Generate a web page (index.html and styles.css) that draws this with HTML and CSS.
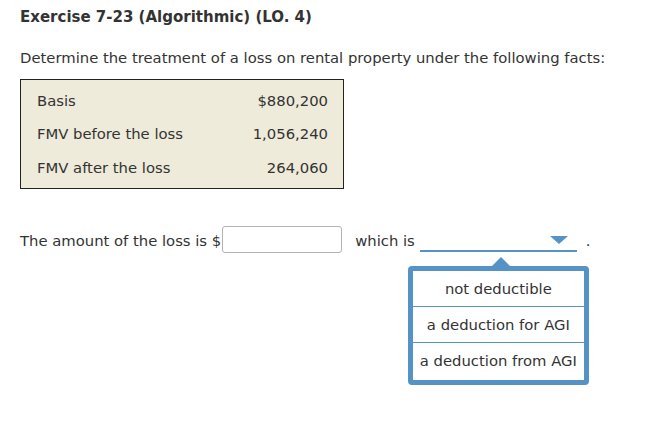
FILE: index.html
```html
<!DOCTYPE html>
<html>
<head>
<meta charset="utf-8">
<link rel="stylesheet" href="styles.css">
</head>
<body>
<div class="page">
  <h1 class="title">Exercise 7-23 (Algorithmic) (LO. 4)</h1>
  <p class="intro">Determine the treatment of a loss on rental property under the following facts:</p>
  <div class="facts">
    <div class="row"><span>Basis</span><span>$880,200</span></div>
    <div class="row"><span>FMV before the loss</span><span>1,056,240</span></div>
    <div class="row"><span>FMV after the loss</span><span>264,060</span></div>
  </div>
  <div class="answer">
    <span class="lbl">The amount of the loss is $</span><span class="inp"></span>
    <span class="lbl which">which is</span>
    <span class="dd">
      <span class="ddline"></span>
      <span class="tri"></span>
      <div class="menu">
        <span class="arrow"></span>
        <div class="opt">not deductible</div>
        <div class="opt">a deduction for AGI</div>
        <div class="opt">a deduction from AGI</div>
      </div>
    </span>
    <span class="lbl dot">.</span>
  </div>
</div>
</body>
</html>
```
FILE: styles.css
```css
html, body { margin: 0; padding: 0; background: #fff; }
body { font-family: "DejaVu Sans", Verdana, sans-serif; color: #333; font-size: 14.8px; }
.page { padding: 8px 20px 0 20px; }
.title { font-size: 15px; font-weight: bold; margin: 0; line-height: 18px; color: #333; }
.intro { margin: 23px 0 0 0; line-height: 18px; }
.facts {
  margin-top: 12px; width: 324px; height: 110px; box-sizing: border-box;
  border: 1px solid #222; background: #eeebda;
  padding: 12px 15px 0 16px;
  display: flex; flex-direction: column; gap: 15px;
}
.facts .row:last-child { margin-top: 1px; }
.row { display: flex; justify-content: space-between; line-height: 18px; }
.answer { margin-top: 37px; display: flex; align-items: flex-start; height: 200px; }
.lbl { line-height: 18px; margin-top: 6px; }
.inp {
  width: 118px; height: 25px; border: 1px solid #b3b3b3; border-radius: 3px;
  margin-left: 1px;
}
.which { margin-left: 13px; }
.dd { position: relative; width: 157px; height: 26px; margin-left: 5px; }
.ddline { position: absolute; left: 0; right: 0; top: 24px; height: 2px; background: #5593c7; }
.tri {
  position: absolute; left: 130px; top: 10px; width: 0; height: 0;
  border-left: 9px solid transparent; border-right: 9px solid transparent;
  border-top: 8px solid #5593c7;
}
.dot { margin-left: 9px; }
.menu {
  position: absolute; left: -12px; top: 40px; width: 181px; box-sizing: border-box;
  border: 5px solid #5593c7; border-radius: 4px; background: #fff;
}
.arrow {
  position: absolute; left: 79px; top: -14px; width: 0; height: 0;
  border-left: 9px solid transparent; border-right: 9px solid transparent;
  border-bottom: 9px solid #5593c7;
}
.opt { text-align: center; line-height: 18px; padding: 9px 0 8px 0; }
.opt:last-child { padding-bottom: 10px; }
.opt + .opt { border-top: 1px solid #5593c7; }
```
